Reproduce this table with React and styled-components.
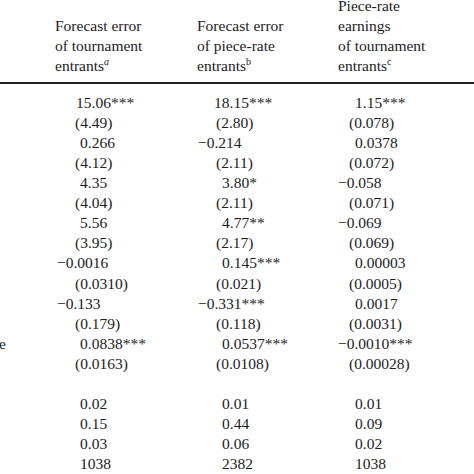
import React from 'react';
import styled, { createGlobalStyle } from 'styled-components';

const GlobalStyle = createGlobalStyle`
  html, body {
    margin: 0;
    padding: 0;
    background: #fff;
  }
  body {
    font-family: "Liberation Serif", "Times New Roman", serif;
    color: #1c1c1c;
    overflow: hidden;
  }
`;

const COLS = '55px 142px 141px 1fr';
const COL_START = [55, 197, 338];

const Table = styled.div`
  width: 474px;
  height: 474px;
  overflow: hidden;
  font-size: 15.5px;
`;

const Header = styled.div`
  display: grid;
  grid-template-columns: ${COLS};
  align-items: end;
  margin-top: -4.5px;
  padding-bottom: 6.5px;
  border-bottom: 2px solid #222;
  line-height: 20px;
`;

const HeadCell = styled.div`
  white-space: nowrap;
`;

const Sup = styled.sup`
  font-size: 10px;
  line-height: 0;
  vertical-align: 6px;
  font-style: ${(p) => (p.$italic ? 'italic' : 'normal')};
`;

const Body = styled.div`
  padding-top: 8.7px;
`;

const Row = styled.div`
  display: grid;
  grid-template-columns: ${COLS};
  height: 20.1px;
  line-height: 20.1px;
  white-space: nowrap;
`;

const Label = styled.div`
  margin-left: -1px;
`;

const Cell = styled.div`
  padding-left: ${(p) => p.$x}px;
`;

// each cell: [text, absolute x]
const rows = [
  [['15.06***', 76], ['18.15***', 214], ['1.15***', 355]],
  [['(4.49)', 75], ['(2.80)', 216], ['(0.078)', 349]],
  [['0.266', 80], ['\u22120.214', 198], ['0.0378', 355]],
  [['(4.12)', 75], ['(2.11)', 216], ['(0.072)', 349]],
  [['4.35', 80], ['3.80*', 222], ['\u22120.058', 338]],
  [['(4.04)', 75], ['(2.11)', 216], ['(0.071)', 349]],
  [['5.56', 80], ['4.77**', 222], ['\u22120.069', 338]],
  [['(3.95)', 75], ['(2.17)', 216], ['(0.069)', 349]],
  [['\u22120.0016', 57], ['0.145***', 222], ['0.00003', 355]],
  [['(0.0310)', 75], ['(0.021)', 216], ['(0.0005)', 349]],
  [['\u22120.133', 57], ['\u22120.331***', 198], ['0.0017', 355]],
  [['(0.179)', 75], ['(0.118)', 216], ['(0.0031)', 349]],
  [['0.0838***', 80], ['0.0537***', 222], ['\u22120.0010***', 338]],
  [['(0.0163)', 75], ['(0.0108)', 216], ['(0.00028)', 349]],
  null,
  [['0.02', 80], ['0.01', 222], ['0.01', 355]],
  [['0.15', 80], ['0.44', 222], ['0.09', 355]],
  [['0.03', 80], ['0.06', 222], ['0.02', 355]],
  [['1038', 80], ['2382', 222], ['1038', 355]],
];

const labels = { 12: 'e' };

export default function App() {
  return (
    <>
      <GlobalStyle />
      <Table>
        <Header>
          <HeadCell />
          <HeadCell>
            Forecast error
            <br />
            of tournament
            <br />
            entrants<Sup $italic>a</Sup>
          </HeadCell>
          <HeadCell>
            Forecast error
            <br />
            of piece-rate
            <br />
            entrants<Sup>b</Sup>
          </HeadCell>
          <HeadCell>
            Piece-rate
            <br />
            earnings
            <br />
            of tournament
            <br />
            entrants<Sup>c</Sup>
          </HeadCell>
        </Header>
        <Body>
          {rows.map((r, i) => (
            <Row key={i}>
              <Label>{labels[i] || ''}</Label>
              {r &&
                r.map(([text, x], j) => (
                  <Cell key={j} $x={x - COL_START[j]}>
                    {text}
                  </Cell>
                ))}
            </Row>
          ))}
        </Body>
      </Table>
    </>
  );
}
